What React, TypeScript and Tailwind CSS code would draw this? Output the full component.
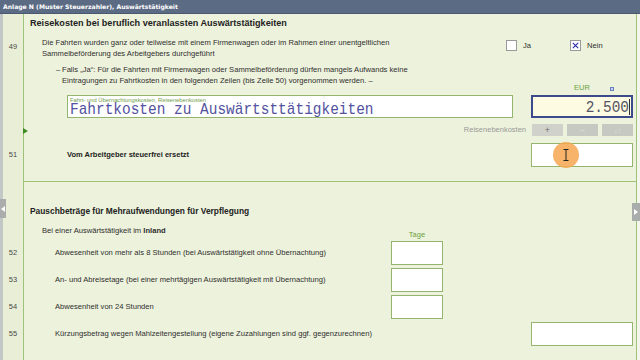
import React from "react";

const BORDER = "border-[#9fc27a]";

function Row({
  num,
  h,
  children,
  className = "",
}: {
  num?: string;
  h: string;
  children?: React.ReactNode;
  className?: string;
}) {
  return (
    <div className={`flex ${h}`}>
      <div className="w-[20px] shrink-0 flex items-center justify-center text-[7.5px] text-[#4a4a4a]">{num}</div>
      <div className={`flex-1 border-l border-r ${BORDER} relative flex ${className}`}>{children}</div>
    </div>
  );
}

function Box({ w, h = "h-[24px]" }: { w: string; h?: string }) {
  return <div className={`${w} ${h} bg-white border border-[#93b56d] shrink-0`} />;
}

function Check({ checked }: { checked?: boolean }) {
  return (
    <div className="w-[11px] h-[11px] bg-white border border-[#9a9a9a] flex items-center justify-center">
      {checked && (
        <svg width="7" height="7" viewBox="0 0 7 7">
          <path d="M0.8 0.8 L6.2 6.2 M6.2 0.8 L0.8 6.2" stroke="#2b2ba6" strokeWidth="1.1" />
        </svg>
      )}
    </div>
  );
}

export default function App() {
  return (
    <div className="w-[640px] h-[360px] overflow-hidden relative flex flex-col bg-[#edf2dc] text-[#2f2f2f] font-['Liberation_Sans',Arial,sans-serif]">
      {/* title bar */}
      <div className="h-[14px] shrink-0 bg-[#5c6b84] border-b border-[#4a5870] flex items-center pl-[3px] text-white text-[6.1px] font-bold font-['DejaVu_Sans',sans-serif]">
        Anlage N (Muster Steuerzahler), Auswärtstätigkeit
      </div>

      <div className="flex-1 flex">
        <div className="w-[3px] shrink-0 bg-[#c3c7c6]" />
        <div className="flex-1 flex flex-col bg-[#e9efd6]">
          {/* Section header */}
          <Row h="h-[20px]" className="items-center pl-[6px] bg-[#edf2dc]">
            <span className="text-[9.1px] font-bold text-[#222]">Reisekosten bei beruflich veranlassten Auswärtstätigkeiten</span>
          </Row>

          {/* 49 */}
          <Row num="49" h="h-[26px]" className="items-center pl-[18px] bg-[#edf2dc]">
            <div className="w-[464px] text-[7.6px] leading-[11px] pt-[1px]">
              Die Fahrten wurden ganz oder teilweise mit einem Firmenwagen oder im Rahmen einer unentgeltlichen
              <br />
              Sammelbeförderung des Arbeitgebers durchgeführt
            </div>
            <div className="w-[64px] flex items-center gap-[6px] -mt-[3px]">
              <Check />
              <span className="text-[7.6px]">Ja</span>
            </div>
            <div className="flex items-center gap-[6px] -mt-[3px]">
              <Check checked />
              <span className="text-[7.6px]">Nein</span>
            </div>
          </Row>

          {/* Falls Ja */}
          <Row h="h-[26px]" className="items-start pl-[32px] pt-[4px] bg-[#edf2dc]">
            <span className="w-[6px] text-[7.6px] leading-[11px]">–</span>
            <div className="text-[7.6px] leading-[11px]">
              Falls „Ja“: Für die Fahrten mit Firmenwagen oder Sammelbeförderung dürfen mangels Aufwands keine
              <br />
              Eintragungen zu Fahrtkosten in den folgenden Zeilen (bis Zeile 50) vorgenommen werden. –
            </div>
          </Row>

          {/* 50 */}
          <Row h="h-[34px]" className="items-end pl-[43px] pr-[3px] pb-[2px] bg-[#edf2dc]">
            <div className="w-[446px] h-[23px] bg-white border border-[#93b56d] flex flex-col pl-[2px]">
              <span className="text-[5.8px] leading-[6px] text-[#6f9c47] mt-[1px]">Fahrt- und Übernachtungskosten, Reisenebenkosten</span>
              <span className="text-[17px] leading-[14px] text-[#52529e] font-['Liberation_Mono',monospace] origin-left scale-x-[0.85] whitespace-nowrap">
                Fahrtkosten zu Auswärtsttätigkeiten
              </span>
            </div>
            <div className="ml-[18px] w-[102px] flex flex-col">
              <div className="h-[9px] relative flex justify-center">
                <span className="text-[7.5px] leading-[7px] text-[#6c9f3e] -mt-[2px]">EUR</span>
                <div className="absolute right-[19px] top-[1px] w-[4px] h-[4px] border border-[#6b7fc0] bg-[#c9d3f0]" />
              </div>
              <div className="h-[23px] bg-[#fdfbe2] border-2 border-[#3d4a8c] flex items-center justify-end pr-[1px]">
                <span className="text-[17px] leading-[13px] text-[#555566] font-['Liberation_Mono',monospace] origin-right scale-x-[0.85] mt-[1px]">
                  2.500
                </span>
                <div className="w-[1px] h-[16px] bg-[#333]" />
              </div>
            </div>
          </Row>

          {/* Reisenebenkosten */}
          <Row h="h-[20px]" className="items-center justify-end pr-[3px] bg-[#edf2dc]">
            <div className="absolute -left-[1px] top-[8px] w-0 h-0 border-y-[3px] border-y-transparent border-l-[5px] border-l-[#3d8a22]" />
            <span className="text-[7.5px] text-[#9a9a9a] mr-[6px]">Reisenebenkosten</span>
            <div className="flex gap-[4px]">
              <div className="w-[31px] h-[12px] bg-[#cfd1ca] flex items-center justify-center text-[9px] leading-none text-[#6f6f6f]">+</div>
              <div className="w-[31px] h-[12px] bg-[#c6c9c1] flex items-center justify-center text-[9px] leading-none text-[#dfe0dc]">−</div>
              <div className="w-[31px] h-[12px] bg-[#c6c9c1] flex items-center justify-center text-[7px] leading-none text-[#dfe0dc]">↓↑</div>
            </div>
          </Row>

          {/* 51 */}
          <Row num="51" h="h-[30px]" className="items-center pl-[43px] pr-[3px] bg-[#edf2dc]">
            <span className="text-[7.5px] font-bold text-[#222] flex-1">Vom Arbeitgeber steuerfrei ersetzt</span>
            <Box w="w-[102px]" />
          </Row>

          <Row h="h-[12px]" className={`border-b ${BORDER} bg-[#edf2dc]`} />

          {/* Section 2 */}
          <Row h="h-[21px]" className="bg-[#edf2dc]" />
          <Row h="h-[16px]" className="items-center pl-[6px] bg-[#edf2dc]">
            <span className="text-[8.4px] font-bold text-[#222]">Pauschbeträge für Mehraufwendungen für Verpflegung</span>
          </Row>
          <Row h="h-[20px]" className="pl-[18px] bg-[#edf2dc]">
            <span className="w-[349px] text-[7.6px] mt-[7px] leading-[10px]">
              Bei einer Auswärtstätigkeit im <b>Inland</b>
            </span>
            <span className="w-[52px] self-end text-center text-[7.5px] leading-[8px] text-[#6c9f3e]">Tage</span>
          </Row>

          <Row num="52" h="h-[27px]" className="items-center pl-[31px] bg-[#edf2dc]">
            <span className="w-[336px] text-[7.6px]">Abwesenheit von mehr als 8 Stunden (bei Auswärtstätigkeit ohne Übernachtung)</span>
            <Box w="w-[52px]" />
          </Row>
          <Row num="53" h="h-[27px]" className="items-center pl-[31px] bg-[#edf2dc]">
            <span className="w-[336px] text-[7.6px]">An- und Abreisetage (bei einer mehrtägigen Auswärtstätigkeit mit Übernachtung)</span>
            <Box w="w-[52px]" />
          </Row>
          <Row num="54" h="h-[27px]" className="items-center pl-[31px] bg-[#edf2dc]">
            <span className="w-[336px] text-[7.6px]">Abwesenheit von 24 Stunden</span>
            <Box w="w-[52px]" />
          </Row>
          <Row num="55" h="h-[27px]" className="items-center pl-[31px] pr-[3px] bg-[#edf2dc]">
            <span className="flex-1 text-[7.6px]">Kürzungsbetrag wegen Mahlzeitengestellung (eigene Zuzahlungen sind ggf. gegenzurechnen)</span>
            <Box w="w-[102px]" />
          </Row>
          <Row h="h-[20px]" className="bg-[#edf2dc]" />
        </div>
        <div className="w-[3px] shrink-0 bg-[#f4f6ee]" />
      </div>

      {/* left tab */}
      <div className="absolute left-0 top-[199px] w-[6px] h-[19px] bg-[#a9adab] flex items-center justify-center">
        <div className="w-0 h-0 border-y-[3px] border-y-transparent border-r-[4px] border-r-white" />
      </div>
      {/* right tab */}
      <div className="absolute right-0 top-[203px] w-[8px] h-[18px] bg-[#a9adab] flex items-center justify-center">
        <div className="w-0 h-0 border-y-[3px] border-y-transparent border-l-[4px] border-l-white" />
      </div>

      {/* cursor highlight */}
      <div className="absolute left-[553px] top-[142px] w-[26px] h-[26px] rounded-full bg-[#f6a64f]/85 flex items-center justify-center">
        <svg width="6" height="12" viewBox="0 0 6 12">
          <path d="M0.5 0.5 H5.5 M3 0.5 V11.5 M0.5 11.5 H5.5" stroke="#222" strokeWidth="1" fill="none" />
        </svg>
      </div>
    </div>
  );
}
